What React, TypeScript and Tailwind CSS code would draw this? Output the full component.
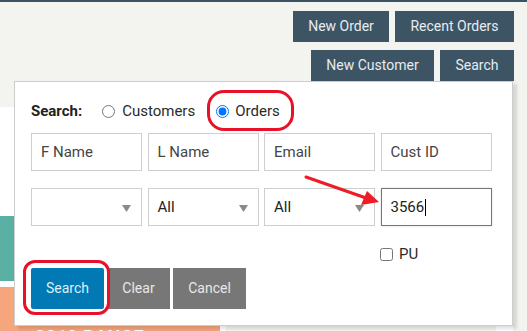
import type { ReactNode } from 'react';

const font = { fontFamily: 'Roboto, "Liberation Sans", sans-serif' };

// Botão escuro do cabeçalho.
function NavButton({ children, className = '' }: { children: ReactNode; className?: string }) {
  return (
    <button
      className={`h-[31px] bg-[#3d5465] px-[15px] text-[14px] text-[#e6ecef] ${className}`}
    >
      {children}
    </button>
  );
}

function TextBox({ placeholder }: { placeholder: string }) {
  return (
    <input
      readOnly
      placeholder={placeholder}
      className="h-[38px] w-[111px] border border-[#cfcfcf] bg-white px-[9px] text-[15px] text-[#333] outline-none placeholder:text-[#454545]"
    />
  );
}

function SelectBox({ value }: { value: string }) {
  return (
    <div className="relative flex h-[38px] w-[111px] items-center border border-[#cfcfcf] bg-white pl-[9px] text-[15px] text-[#222]">
      {value}
      <svg className="absolute right-[10px] top-[16px]" width="9" height="7" viewBox="0 0 9 7">
        <path d="M0 0 L9 0 L4.5 7 Z" fill="#8a8a8a" />
      </svg>
    </div>
  );
}

export default function App() {
  return (
    <div className="relative h-[331px] w-full overflow-hidden border-t-2 border-[#3a5262] bg-[#f3f3ef]" style={font}>
      {/* cabeçalho com ações */}
      <div className="flex flex-col items-end gap-[8px] pr-[13px] pt-[9px]">
        <div className="flex gap-[6px]">
          <NavButton className="w-[96px]">New Order</NavButton>
          <NavButton className="w-[119px]">Recent Orders</NavButton>
        </div>
        <div className="flex gap-[6px]">
          <NavButton className="w-[123px]">New Customer</NavButton>
          <NavButton className="w-[74px]">Search</NavButton>
        </div>
      </div>

      {/* conteúdo por trás do painel */}
      <div className="mt-[26px] flex h-[300px] w-[513px] bg-white">
        <div className="flex w-[220px] flex-col">
          <div className="mt-[109px] h-[65px] bg-[#59b0a3]" />
          <div className="mt-[6px] flex-1 bg-[#f5a67d] pl-[35px] pt-[36px] text-[18px] font-bold tracking-wide text-white">
            2019 RANGE
          </div>
        </div>
        <div className="ml-[6px] mt-[217px] h-[20px] w-[270px] bg-[#f3f3ef]" />
      </div>

      {/* painel de pesquisa */}
      <div className="absolute left-[14px] top-[79px] h-[245px] w-[499px] border border-[#cdcdcd] bg-white pl-[16px] pt-[11px] shadow-[4px_3px_3px_rgba(0,0,0,0.12)]">
        <div className="flex h-[36px] items-center text-[15px] text-[#2b2b2b]">
          <span className="font-bold text-[#222]">Search:</span>
          <input type="radio" readOnly className="m-0 ml-[20px] h-[13px] w-[13px]" />
          <span className="ml-[7px]">Customers</span>
          <span className="relative ml-[21px] flex items-center">
            <input type="radio" readOnly checked className="m-0 h-[13px] w-[13px]" />
            <span className="ml-[6px]">Orders</span>
            <span className="absolute -bottom-[9px] -left-[9px] -right-[14px] -top-[10px] rounded-[17px] border-[3px] border-[#e9102a]" />
          </span>
        </div>

        <div className="mt-[4px] grid grid-cols-[111px_111px_111px_111px] gap-x-[5.5px] gap-y-[17px]">
          <TextBox placeholder="F Name" />
          <TextBox placeholder="L Name" />
          <TextBox placeholder="Email" />
          <TextBox placeholder="Cust ID" />
          <SelectBox value="" />
          <SelectBox value="All" />
          <SelectBox value="All" />
          <div className="flex h-[38px] w-[111px] items-center border border-[#767676] bg-white pl-[9px] text-[15px] text-[#222] shadow-[0_0_2px_rgba(0,0,0,0.15)]">
            3566
            <span className="ml-[1px] h-[17px] w-px bg-black" />
          </div>
        </div>

        <div className="mt-[21px] flex h-[14px] items-center pl-[349px] text-[15px] leading-none text-[#2b2b2b]">
          <input type="checkbox" readOnly className="m-0 h-[13px] w-[13px]" />
          <span className="ml-[6px]">PU</span>
        </div>

        <div className="mt-[7px] flex gap-[3px]">
          <div className="relative">
            <button className="h-[41px] w-[73px] rounded-[2px] bg-[#0179b5] text-[14px] text-[#dfeef7]">Search</button>
            <span className="absolute -bottom-[6px] -left-[8px] -right-[6px] -top-[8px] rounded-[12px] border-[3px] border-[#e9102a]" />
          </div>
          <button className="h-[41px] w-[63px] bg-[#777777] text-[14px] text-[#e8e8e8]">Clear</button>
          <button className="h-[41px] w-[73px] bg-[#777777] text-[14px] text-[#e8e8e8]">Cancel</button>
        </div>
      </div>

      {/* seta de anotação */}
      <svg className="absolute left-0 top-0" width="527" height="331" viewBox="0 0 527 331">
        <line x1="306" y1="175" x2="366" y2="196" stroke="#ee1c25" strokeWidth="3" strokeLinecap="round" />
        <path d="M379 200 L361 203 L367 189 Z" fill="#ee1c25" />
      </svg>
    </div>
  );
}
